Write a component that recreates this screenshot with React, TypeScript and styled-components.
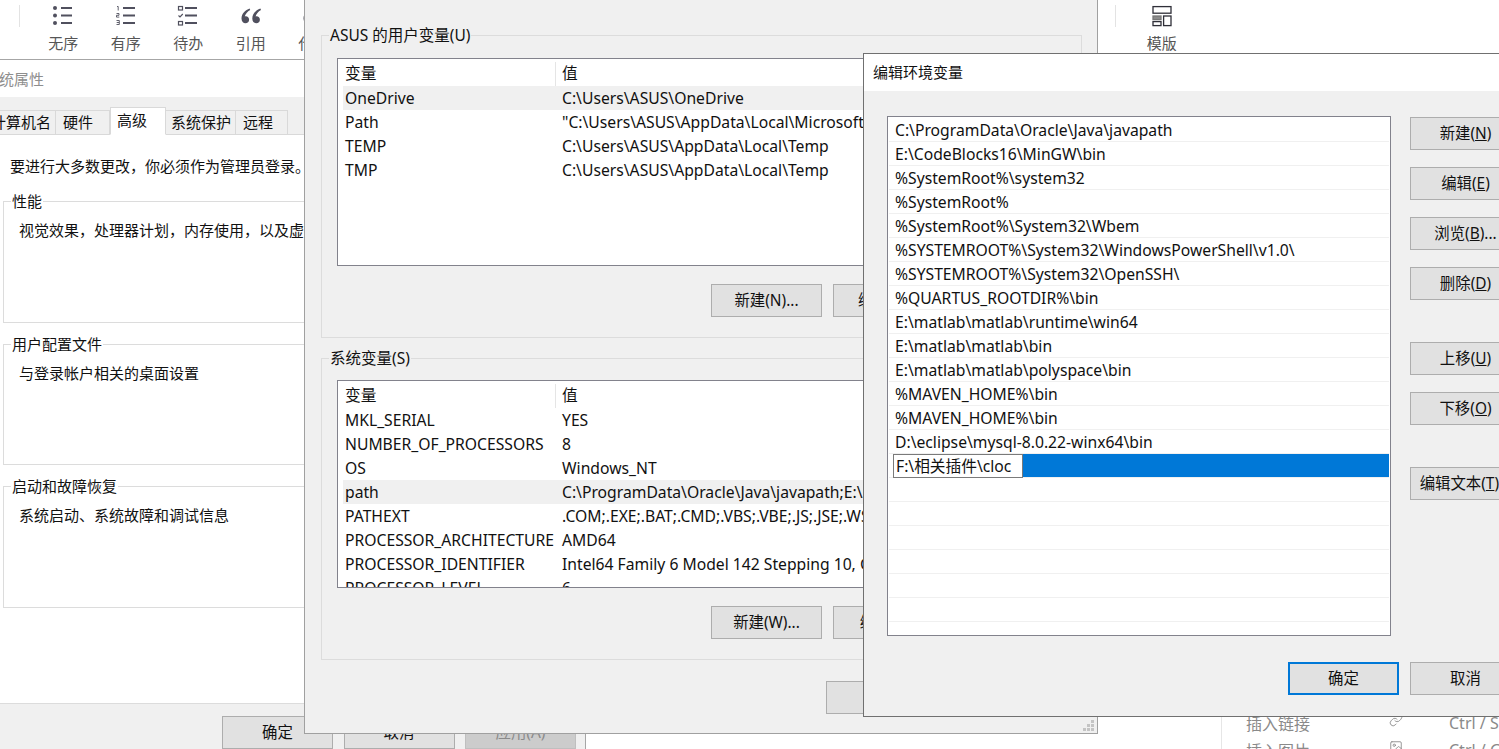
import styled, { createGlobalStyle } from 'styled-components'
import { Link, Image } from 'lucide-react'

const GlobalStyle = createGlobalStyle`
  html, body {
    margin: 0;
    padding: 0;
    background: #fff;
    overflow: hidden;
  }
  * {
    box-sizing: border-box;
  }
`

const dialogGrey = '#f0f0f0'
const dialogFont = `"Noto Sans", "Noto Sans CJK SC", sans-serif`

const Desktop = styled.div`
  position: relative;
  width: 1499px;
  height: 749px;
  overflow: hidden;
  background: #fff;
  font-family: ${dialogFont};
  font-size: 15px;
  color: #111;
  display: flex;
  flex-direction: column;
`

/* editor behind the dialogs */
const Toolbar = styled.div`
  flex: none;
  height: 60px;
  display: flex;
  align-items: flex-start;
  justify-content: space-between;
  padding: 5px 306px 0 19px;
`

const ToolGroup = styled.div`
  display: flex;
  align-items: flex-start;
`

const ToolDivider = styled.div`
  width: 1px;
  height: 22px;
  background: #e3e3e3;
  margin-right: 12px;
`

const ToolItem = styled.div`
  width: 62.5px;
  display: flex;
  flex-direction: column;
  align-items: center;
  gap: 4px;
  margin-top: -1px;
  color: #565656;
  font-size: 15px;
  line-height: 22px;

  svg {
    display: block;
  }
`

const ToolTemplate = styled(ToolItem)`
  margin-left: 3px;
`

const EditorBody = styled.div`
  flex: 1;
  display: flex;
  justify-content: flex-end;
  padding-top: 649px;
`

const OutlinePanel = styled.div`
  width: 278px;
  padding: 0 0 0 24px;
  border-left: 1px solid #e6e6e6;
  color: #8a8a8a;
  font-size: 16px;
`

const OutlineRow = styled.div`
  height: 27px;
  display: grid;
  grid-template-columns: 143px 60px 1fr;
  align-items: center;
  white-space: nowrap;
  overflow: hidden;

  svg {
    transform: translateY(-3px);
  }
`

/* windows are placed freely on the desktop */
const SystemWindow = styled.div`
  position: absolute;
  left: -14px;
  top: 59px;
  width: 600px;
  height: 720px;
  background: #fff;
  border-top: 1px solid #a6a6a6;
  border-right: 1px solid #a6a6a6;
  display: flex;
  flex-direction: column;
`

const SystemTitle = styled.div`
  height: 37px;
  margin-left: -2px;
  line-height: 38px;
  color: #8e8e8e;
`

const TabStrip = styled.div`
  height: 38px;
  background: ${dialogGrey};
  border-bottom: 1px solid #d9d9d9;
  display: flex;
  align-items: flex-end;
`

const Tab = styled.div<{ $width: number; $inset: number; $active?: boolean }>`
  width: ${(p) => p.$width}px;
  height: ${(p) => (p.$active ? 28 : 25)}px;
  margin-bottom: -1px;
  padding-left: ${(p) => p.$inset}px;
  background: ${(p) => (p.$active ? '#fff' : dialogGrey)};
  border: 1px solid #d9d9d9;
  border-left-width: ${(p) => (p.$active ? 1 : 0)}px;
  border-bottom-color: ${(p) => (p.$active ? '#fff' : '#d9d9d9')};
  line-height: ${(p) => (p.$active ? 24 : 22)}px;
  white-space: nowrap;
`

const SystemBody = styled.div`
  flex: none;
  height: 568px;
  padding: 19px 13px 0 17px;
`

const AdminNote = styled.div`
  padding-left: 7px;
  line-height: 24px;
  margin-bottom: 23px;
  white-space: nowrap;
  overflow: hidden;
`

const GroupBox = styled.div<{ $height: number }>`
  position: relative;
  height: ${(p) => p.$height}px;
  border: 1px solid #dcdcdc;
`

const Legend = styled.span`
  position: absolute;
  left: 7px;
  top: -11px;
  padding: 0 1px;
  line-height: 20px;
  white-space: nowrap;
  background: #fff;
`

const VarLegend = styled(Legend)`
  font-size: 15.5px;
  background: ${dialogGrey};
`

const GroupText = styled.div`
  padding: 16px 0 0 15px;
  line-height: 24px;
  white-space: nowrap;
  overflow: hidden;
`

const PerfBox = styled(GroupBox)`
  margin-bottom: 21px;
`

const DialogFooter = styled.div`
  flex: 1;
  background: ${dialogGrey};
  border-top: 1px solid #dcdcdc;
  display: flex;
  justify-content: flex-end;
  gap: 10.5px;
  padding: 12px 9px 0 0;
`

const Button = styled.button<{ $primary?: boolean }>`
  flex: none;
  width: 111px;
  height: 33px;
  padding: 0;
  background: #e1e1e1;
  border: ${(p) => (p.$primary ? '2px solid #0078d7' : '1px solid #adadad')};
  font-family: ${dialogFont};
  font-size: 15.4px;
  line-height: 20px;
  color: #111;
  white-space: nowrap;
  overflow: hidden;

  &:disabled {
    background: #cccccc;
    border-color: #bfbfbf;
    color: #8a8a8a;
  }
`

const EnvWindow = styled.div`
  position: absolute;
  left: 304px;
  top: -20px;
  width: 794px;
  height: 754px;
  background: ${dialogGrey};
  border: 1px solid #a0a0a0;
  border-top: 0;
  padding: 55px 15px 0 16px;
  display: flex;
  flex-direction: column;
`

const VarGroup = styled(GroupBox)<{ $top: number }>`
  padding: ${(p) => p.$top}px 15px 0;
  margin-bottom: 20px;
`

const VarList = styled.div`
  height: 208px;
  background: #fff;
  border: 1px solid #82828c;
  padding: 3px 0 0 5px;
  overflow: hidden;
`

const VarRow = styled.div<{ $selected?: boolean }>`
  height: 24px;
  padding-top: 1px;
  display: grid;
  grid-template-columns: 212px 1fr;
  background: ${(p) => (p.$selected ? '#f0f0f0' : 'transparent')};
  font-size: 15.7px;
  line-height: 23px;
  white-space: nowrap;
  overflow: hidden;
`

const VarHeader = styled(VarRow)`
  padding-top: 0;
  line-height: 23px;
`

const VarName = styled.div`
  padding-left: 2px;
  overflow: hidden;
`

const VarValue = styled.div`
  padding-left: 7px;
  overflow: hidden;
`

const HeaderValue = styled(VarValue)`
  border-left: 1px solid #e5e5e5;
  padding-left: 6px;
`

const VarActions = styled.div`
  display: flex;
  gap: 11px;
  margin: 18px 0 0 374px;
`

const EnvActions = styled.div`
  display: flex;
  justify-content: flex-end;
  gap: 11px;
  padding-right: 23px;
  margin-top: 1px;
`

const GripMark = styled.svg`
  position: absolute;
  right: 3px;
  bottom: 2px;
  display: block;
`

const EditWindow = styled.div`
  position: absolute;
  left: 863px;
  top: 53px;
  width: 682px;
  height: 664px;
  background: ${dialogGrey};
  border: 1px solid #707070;
  display: flex;
  flex-direction: column;
`

const EditTitle = styled.div`
  flex: none;
  height: 37px;
  background: #fff;
  padding-left: 9px;
  line-height: 37px;
`

const EditMain = styled.div`
  display: flex;
  gap: 19px;
  padding: 25px 0 0 23px;
`

const PathList = styled.div`
  flex: none;
  width: 504px;
  height: 520px;
  background: #fff;
  border: 1px solid #82828c;
  padding: 1px;
`

const PathRow = styled.div`
  height: 24px;
  padding-left: 6px;
  font-size: 15.7px;
  line-height: 24px;
  border-bottom: 1px solid #f0f0f0;
  white-space: nowrap;
`

const SelectedPathRow = styled(PathRow)`
  display: flex;
  padding-left: 4px;
`

const PathEditor = styled.div`
  flex: none;
  width: 130px;
  height: 24px;
  background: #fff;
  border: 1px solid #7a7a7a;
  padding-left: 2px;
  line-height: 23px;
`

const SelectionFill = styled.div`
  flex: 1;
  height: 23px;
  background: #0078d7;
`

const SideButtons = styled.div`
  display: flex;
  flex-direction: column;
  gap: 42px;
  padding-top: 1px;
`

const SideGroup = styled.div`
  display: flex;
  flex-direction: column;
  gap: 17px;
`

const EditFooter = styled.div`
  display: flex;
  justify-content: flex-end;
  gap: 11px;
  padding: 26px 23px 0 0;
`

const ListIcon = () => (
  <svg width="24" height="24" viewBox="0 0 24 24" fill="#50505e">
    <circle cx="4" cy="4" r="2" />
    <circle cx="4" cy="11.5" r="2" />
    <circle cx="4" cy="19" r="2" />
    <rect x="10" y="3" width="11" height="2" />
    <rect x="10" y="10.5" width="11" height="2" />
    <rect x="10" y="18" width="11" height="2" />
  </svg>
)

const OrderedIcon = () => (
  <svg width="24" height="24" viewBox="0 0 24 24" fill="none" stroke="#50505e">
    <path d="M3 2.5h1.2v4M2.5 9.5h2.5v1.8h-2.5v1.8h2.8M2.5 16.5h2.8v4h-2.8M2.7 18.5h2.4" strokeWidth="0.9" />
    <path d="M9 4h12M9 11.5h12M9 19h12" strokeWidth="2" />
  </svg>
)

const TodoIcon = () => (
  <svg width="24" height="24" viewBox="0 0 24 24" fill="none" stroke="#50505e">
    <rect x="2.5" y="2.5" width="4" height="3.5" strokeWidth="1.2" />
    <path d="M2.5 11.5l1.5 1.5 2.8-3" strokeWidth="1.1" />
    <rect x="2.5" y="17.5" width="4" height="3.5" strokeWidth="1.2" />
    <path d="M9 4h12M9 11.5h12M9 19h12" strokeWidth="2" />
  </svg>
)

const QuoteIcon = () => (
  <svg width="24" height="24" viewBox="0 0 24 24" fill="#50505e">
    <path d="M10.6 4.5C6.5 6 2.5 9.5 2.5 14.5c0 3 1.8 4.8 4 4.8 2.1 0 3.6-1.6 3.6-3.6 0-2-1.4-3.4-3.3-3.4-.4 0-.8.1-1 .2.5-2.5 2.6-5 5.4-6.6z" />
    <path d="M21.4 4.5C17.3 6 13.3 9.5 13.3 14.5c0 3 1.8 4.8 4 4.8 2.1 0 3.6-1.6 3.6-3.6 0-2-1.4-3.4-3.3-3.4-.4 0-.8.1-1 .2.5-2.5 2.6-5 5.4-6.6z" />
  </svg>
)

const TemplateIcon = () => (
  <svg width="24" height="24" viewBox="0 0 24 24" fill="none" stroke="#2f2f38" strokeWidth="1.3">
    <rect x="3" y="2.6" width="18" height="6.6" />
    <rect x="3" y="12" width="8" height="3.6" fill="#8b8b8b" stroke="#777" />
    <rect x="3" y="17.6" width="8" height="4" />
    <rect x="13.6" y="12" width="7.4" height="9.6" />
  </svg>
)

const ResizeGrip = () => (
  <GripMark width="11" height="11" viewBox="0 0 11 11" fill="#c4c4c4">
    <rect x="8" y="0" width="3" height="3" />
    <rect x="4" y="4" width="3" height="3" />
    <rect x="8" y="4" width="3" height="3" />
    <rect x="0" y="8" width="3" height="3" />
    <rect x="4" y="8" width="3" height="3" />
    <rect x="8" y="8" width="3" height="3" />
  </GripMark>
)

const userVars = [
  ['OneDrive', 'C:\\Users\\ASUS\\OneDrive'],
  ['Path', '"C:\\Users\\ASUS\\AppData\\Local\\Microsoft\\WindowsApps;'],
  ['TEMP', 'C:\\Users\\ASUS\\AppData\\Local\\Temp'],
  ['TMP', 'C:\\Users\\ASUS\\AppData\\Local\\Temp'],
]

const systemVars = [
  ['MKL_SERIAL', 'YES'],
  ['NUMBER_OF_PROCESSORS', '8'],
  ['OS', 'Windows_NT'],
  ['path', 'C:\\ProgramData\\Oracle\\Java\\javapath;E:\\CodeBlocks16\\MinGW\\bin;'],
  ['PATHEXT', '.COM;.EXE;.BAT;.CMD;.VBS;.VBE;.JS;.JSE;.WSF;.WSH;.MSC'],
  ['PROCESSOR_ARCHITECTURE', 'AMD64'],
  ['PROCESSOR_IDENTIFIER', 'Intel64 Family 6 Model 142 Stepping 10, GenuineIntel'],
  ['PROCESSOR_LEVEL', '6'],
]

const paths = [
  'C:\\ProgramData\\Oracle\\Java\\javapath',
  'E:\\CodeBlocks16\\MinGW\\bin',
  '%SystemRoot%\\system32',
  '%SystemRoot%',
  '%SystemRoot%\\System32\\Wbem',
  '%SYSTEMROOT%\\System32\\WindowsPowerShell\\v1.0\\',
  '%SYSTEMROOT%\\System32\\OpenSSH\\',
  '%QUARTUS_ROOTDIR%\\bin',
  'E:\\matlab\\matlab\\runtime\\win64',
  'E:\\matlab\\matlab\\bin',
  'E:\\matlab\\matlab\\polyspace\\bin',
  '%MAVEN_HOME%\\bin',
  '%MAVEN_HOME%\\bin',
  'D:\\eclipse\\mysql-8.0.22-winx64\\bin',
]

const VarTable = ({ rows, selected }: { rows: string[][]; selected: string }) => (
  <VarList>
    <VarHeader>
      <VarName>变量</VarName>
      <HeaderValue>值</HeaderValue>
    </VarHeader>
    {rows.map(([name, value]) => (
      <VarRow key={name} $selected={name === selected}>
        <VarName>{name}</VarName>
        <VarValue>{value}</VarValue>
      </VarRow>
    ))}
  </VarList>
)

export default function App() {
  return (
    <Desktop>
      <GlobalStyle />

      <Toolbar>
        <ToolGroup>
          <ToolDivider />
          <ToolItem><ListIcon />无序</ToolItem>
          <ToolItem><OrderedIcon />有序</ToolItem>
          <ToolItem><TodoIcon />待办</ToolItem>
          <ToolItem><QuoteIcon />引用</ToolItem>
          <ToolItem><QuoteIcon />代码</ToolItem>
        </ToolGroup>
        <ToolGroup>
          <ToolDivider />
          <ToolTemplate><TemplateIcon />模版</ToolTemplate>
        </ToolGroup>
      </Toolbar>

      <EditorBody>
        <OutlinePanel>
          <OutlineRow>
            <span>插入链接</span>
            <Link size={14} strokeWidth={1.5} />
            <span>Ctrl / S</span>
          </OutlineRow>
          <OutlineRow>
            <span>插入图片</span>
            <Image size={14} strokeWidth={1.5} />
            <span>Ctrl / G</span>
          </OutlineRow>
        </OutlinePanel>
      </EditorBody>

      <SystemWindow>
        <SystemTitle>系统属性</SystemTitle>
        <TabStrip>
          <Tab $width={70} $inset={5}>计算机名</Tab>
          <Tab $width={54} $inset={7}>硬件</Tab>
          <Tab $width={56} $inset={6} $active>高级</Tab>
          <Tab $width={70} $inset={5}>系统保护</Tab>
          <Tab $width={52} $inset={7}>远程</Tab>
        </TabStrip>
        <SystemBody>
          <AdminNote>要进行大多数更改，你必须作为管理员登录。</AdminNote>
          <PerfBox $height={122}>
            <Legend>性能</Legend>
            <GroupText>视觉效果，处理器计划，内存使用，以及虚拟内存</GroupText>
          </PerfBox>
          <PerfBox $height={121}>
            <Legend>用户配置文件</Legend>
            <GroupText>与登录帐户相关的桌面设置</GroupText>
          </PerfBox>
          <GroupBox $height={122}>
            <Legend>启动和故障恢复</Legend>
            <GroupText>系统启动、系统故障和调试信息</GroupText>
          </GroupBox>
        </SystemBody>
        <DialogFooter>
          <Button>确定</Button>
          <Button>取消</Button>
          <Button disabled>应用(A)</Button>
        </DialogFooter>
      </SystemWindow>

      <EnvWindow>
        <VarGroup $height={303} $top={22}>
          <VarLegend>ASUS 的用户变量(U)</VarLegend>
          <VarTable rows={userVars} selected="OneDrive" />
          <VarActions>
            <Button>新建(N)...</Button>
            <Button>编辑(E)...</Button>
            <Button>删除(D)</Button>
          </VarActions>
        </VarGroup>
        <VarGroup $height={302} $top={21}>
          <VarLegend>系统变量(S)</VarLegend>
          <VarTable rows={systemVars} selected="path" />
          <VarActions>
            <Button>新建(W)...</Button>
            <Button>编辑(I)...</Button>
            <Button>删除(L)</Button>
          </VarActions>
        </VarGroup>
        <EnvActions>
          <Button>确定</Button>
          <Button>取消</Button>
        </EnvActions>
        <ResizeGrip />
      </EnvWindow>

      <EditWindow>
        <EditTitle>编辑环境变量</EditTitle>
        <EditMain>
          <PathList>
            {paths.map((path, i) => (
              <PathRow key={i}>{path}</PathRow>
            ))}
            <SelectedPathRow>
              <PathEditor>F:\相关插件\cloc</PathEditor>
              <SelectionFill />
            </SelectedPathRow>
            {Array.from({ length: 6 }, (_, i) => (
              <PathRow key={i} />
            ))}
          </PathList>
          <SideButtons>
            <SideGroup>
              <Button>新建(<u>N</u>)</Button>
              <Button>编辑(<u>E</u>)</Button>
              <Button>浏览(<u>B</u>)...</Button>
              <Button>删除(<u>D</u>)</Button>
            </SideGroup>
            <SideGroup>
              <Button>上移(<u>U</u>)</Button>
              <Button>下移(<u>O</u>)</Button>
            </SideGroup>
            <SideGroup>
              <Button>编辑文本(<u>T</u>)...</Button>
            </SideGroup>
          </SideButtons>
        </EditMain>
        <EditFooter>
          <Button $primary>确定</Button>
          <Button>取消</Button>
        </EditFooter>
      </EditWindow>
    </Desktop>
  )
}
